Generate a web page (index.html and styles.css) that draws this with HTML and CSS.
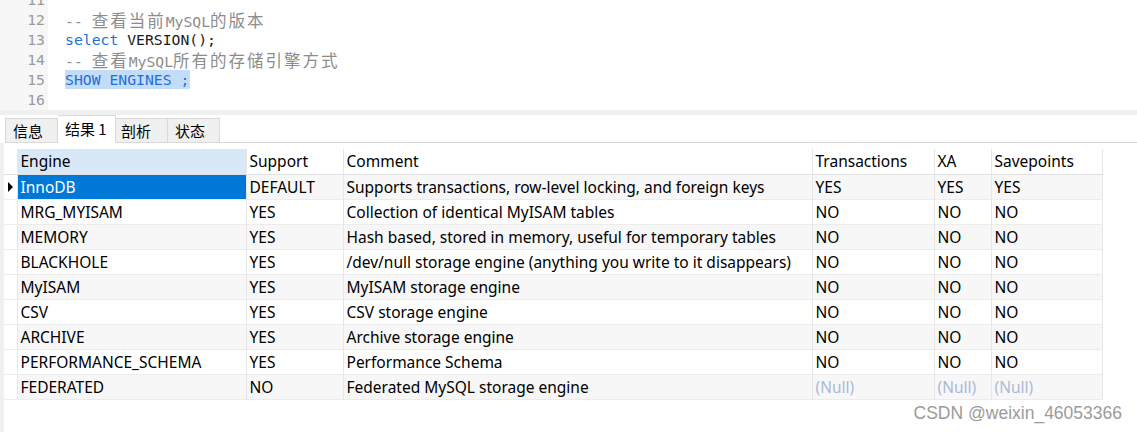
FILE: index.html
```html
<!DOCTYPE html>
<html>
<head>
<meta charset="utf-8">
<link rel="stylesheet" href="styles.css">
</head>
<body>
<div class="editor">
  <div class="gutter">
    <div class="ln">11</div>
    <div class="ln">12</div>
    <div class="ln">13</div>
    <div class="ln">14</div>
    <div class="ln">15</div>
    <div class="ln">16</div>
  </div>
  <div class="code">
    <div class="line"></div>
    <div class="line cm">-- <span class="cjk">查看当前</span>MySQL<span class="cjk">的版本</span></div>
    <div class="line"><span class="kw">select</span> VERSION();</div>
    <div class="line cm">-- <span class="cjk">查看</span>MySQL<span class="cjk">所有的存储引擎方式</span></div>
    <div class="line"><span class="sel kw">SHOW ENGINES ;</span></div>
    <div class="line"></div>
  </div>
</div>
<div class="band"></div>
<div class="tabbar">
  <div class="tab t1">信息</div>
  <div class="tab t2 active">结果 1</div>
  <div class="tab t3">剖析</div>
  <div class="tab t4">状态</div>
  <div class="tabfill"></div>
</div>
<div class="panel">
  <table class="grid">
    <colgroup>
      <col class="c-ind"><col class="c-eng"><col class="c-sup"><col class="c-com"><col class="c-tra"><col class="c-xa"><col class="c-sav">
    </colgroup>
    <thead>
      <tr><th class="ind"></th><th class="hl">Engine</th><th>Support</th><th>Comment</th><th>Transactions</th><th>XA</th><th>Savepoints</th></tr>
    </thead>
    <tbody>
      <tr class="alt"><td class="ind"><span class="arrow"></span></td><td class="cur">InnoDB</td><td>DEFAULT</td><td>Supports transactions, row-level locking, and foreign keys</td><td>YES</td><td>YES</td><td>YES</td></tr>
      <tr><td class="ind"></td><td>MRG_MYISAM</td><td>YES</td><td>Collection of identical MyISAM tables</td><td>NO</td><td>NO</td><td>NO</td></tr>
      <tr class="alt"><td class="ind"></td><td>MEMORY</td><td>YES</td><td>Hash based, stored in memory, useful for temporary tables</td><td>NO</td><td>NO</td><td>NO</td></tr>
      <tr><td class="ind"></td><td>BLACKHOLE</td><td>YES</td><td>/dev/null storage engine (anything you write to it disappears)</td><td>NO</td><td>NO</td><td>NO</td></tr>
      <tr class="alt"><td class="ind"></td><td>MyISAM</td><td>YES</td><td>MyISAM storage engine</td><td>NO</td><td>NO</td><td>NO</td></tr>
      <tr><td class="ind"></td><td>CSV</td><td>YES</td><td>CSV storage engine</td><td>NO</td><td>NO</td><td>NO</td></tr>
      <tr class="alt"><td class="ind"></td><td>ARCHIVE</td><td>YES</td><td>Archive storage engine</td><td>NO</td><td>NO</td><td>NO</td></tr>
      <tr><td class="ind"></td><td>PERFORMANCE_SCHEMA</td><td>YES</td><td>Performance Schema</td><td>NO</td><td>NO</td><td>NO</td></tr>
      <tr class="alt"><td class="ind"></td><td>FEDERATED</td><td>NO</td><td>Federated MySQL storage engine</td><td class="null">(Null)</td><td class="null">(Null)</td><td class="null">(Null)</td></tr>
    </tbody>
  </table>
  <div class="watermark">CSDN @weixin_46053366</div>
</div>
</body>
</html>
```

FILE: styles.css
```css
html, body {
  margin: 0;
  padding: 0;
  background: #ffffff;
}
body {
  width: 1137px;
  height: 432px;
  overflow: hidden;
  position: relative;
}

/* ---------- editor ---------- */
.editor {
  display: flex;
  height: 110px;
  overflow: hidden;
  background: #ffffff;
}
.gutter {
  width: 48px;
  background: #f7f7f7;
  margin-top: -10px;
}
.ln {
  height: 20px;
  line-height: 20px;
  text-align: right;
  padding-right: 3px;
  font-family: "DejaVu Sans Mono", monospace;
  font-size: 14.75px;
  color: #9a9a9a;
}
.code {
  flex: 1;
  padding-left: 17px;
  margin-top: -10px;
  font-family: "DejaVu Sans Mono", monospace;
  font-size: 14.75px;
  color: #1a1a1a;
}
.line {
  height: 20px;
  line-height: 20px;
  white-space: pre;
}
.cm {
  color: #8c8c8c;
}
.cjk {
  font-family: "Noto Sans CJK SC", sans-serif;
  font-size: 16.5px;
  letter-spacing: 2px;
}
.kw {
  color: #1f6fd8;
}
.sel {
  background: #c3ddf8;
  display: inline-block;
  height: 19px;
  line-height: 19px;
  padding-right: 1px;
}

/* ---------- tabs ---------- */
.band {
  height: 5px;
  background: #f0f0f0;
}
.tabbar {
  display: flex;
  align-items: flex-end;
  height: 28px;
  padding-left: 5px;
  background: #ffffff;
}
.tab {
  height: 25px;
  line-height: 23px;
  padding-left: 7px;
  background: #f0f0f0;
  border: 1px solid #d9d9d9;
  border-left: 0;
  font-family: "Noto Sans CJK SC", sans-serif;
  font-size: 15px;
  color: #000;
  box-sizing: border-box;
}
.tab.t1 { width: 53px; border-left: 1px solid #d9d9d9; }
.tab.t2 { width: 58px; }
.tab.t3 { width: 52px; padding-left: 5px; }
.tab.t4 { width: 52px; }
.tab.active {
  height: 28px;
  line-height: 25px;
  background: #ffffff;
  border-bottom-color: #ffffff;
}
.tabfill {
  flex: 1;
  height: 1px;
  background: #d9d9d9;
}

/* ---------- result grid ---------- */
.panel {
  height: 289px;
  border-left: 4px solid #f0f0f0;
  padding-top: 6px;
  box-sizing: border-box;
}
.grid {
  border-collapse: collapse;
  table-layout: fixed;
  width: 1098px;
  font-family: "Noto Sans", sans-serif;
  font-size: 15.5px;
  color: #000;
}
.c-ind { width: 13px; }
.c-eng { width: 229px; }
.c-sup { width: 97px; }
.c-com { width: 469px; }
.c-tra { width: 122px; }
.c-xa  { width: 57px; }
.c-sav { width: 111px; }

.grid tr {
  height: 25px;
}
.grid th, .grid td {
  height: 25px;
  padding: 0 0 0 3px;
  text-align: left;
  font-weight: normal;
  white-space: nowrap;
  overflow: hidden;
  border-right: 1px solid #e6e6e6;
  border-bottom: 1px solid #ececec;
  box-sizing: border-box;
}
.grid th {
  border-bottom: 1px solid #e0e0e0;
}
.grid th.hl {
  background: #d9e8f7;
}
.grid tr.alt td {
  background: #f7f7f7;
}
.grid td.ind, .grid th.ind {
  padding: 0;
  background: #ffffff;
}
.grid tr.alt td.ind {
  background: #ffffff;
}
.grid tr.alt td.cur, .grid td.cur {
  background: #0078d7;
  color: #ffffff;
}
.grid td.null {
  color: #a9bad9;
}
.arrow {
  display: block;
  width: 0;
  height: 0;
  margin-left: 4px;
  border-top: 5px solid transparent;
  border-bottom: 5px solid transparent;
  border-left: 5px solid #000;
}

.watermark {
  position: absolute;
  right: 15px;
  bottom: 8px;
  font-family: "Liberation Sans", Arial, sans-serif;
  font-size: 17.5px;
  color: #9b9b9b;
  text-shadow: 0 0 1px #ffffff;
}
```
